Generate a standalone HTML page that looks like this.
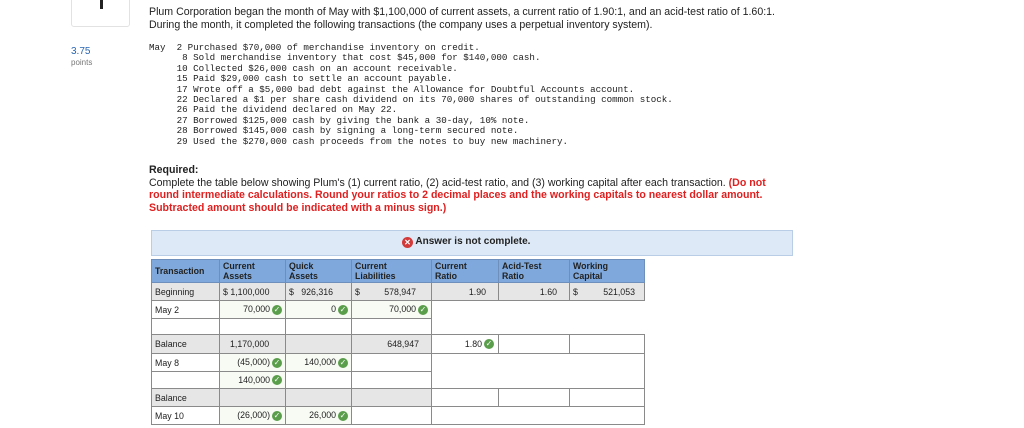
<!DOCTYPE html>
<html><head><meta charset="utf-8"><style>
body{margin:0;width:1024px;height:428px;overflow:hidden;background:#fff;font-family:"Liberation Sans",sans-serif;position:relative}
.a{position:absolute;white-space:nowrap}
.t{font-size:10.6px;color:#222}
.m{font-family:"Liberation Mono",monospace;font-size:9.2px;color:#222;line-height:10.4px;white-space:pre}
.r{color:#e02020;font-weight:bold}
table{position:absolute;left:151px;top:259px;border-collapse:collapse;font-size:8.8px;color:#222;table-layout:fixed}
td{border:1px solid #8a8a8a;padding:0 3px;overflow:hidden;white-space:nowrap}
th{background:#7fa9dd;border:1px solid #6e8fbb;font-weight:bold;text-align:left;padding:0 3px;font-size:8.8px;line-height:10px;color:#222}
.g td{background:#e6e6e6}
.n{text-align:right}
.i{background:#f7fbf4}
.c{display:inline-block;width:10px;height:10px;border-radius:50%;background:#5a9e4b;color:#fff;font-size:8px;line-height:10px;text-align:center;vertical-align:middle;margin-left:2px}
</style></head><body>
<div class="a" style="left:71px;top:-6px;width:57px;height:31px;border:1px solid #e2e2e2;border-radius:3px"></div>
<div class="a" style="left:100px;top:0;width:3px;height:9px;background:#222"></div>
<div class="a t" style="left:149px;top:6px;line-height:12.5px">Plum Corporation began the month of May with $1,100,000 of current assets, a current ratio of 1.90:1, and an acid-test ratio of 1.60:1.<br>During the month, it completed the following transactions (the company uses a perpetual inventory system).</div>
<div class="a" style="left:71px;top:46px;font-size:10px;color:#2a66b0">3.75</div>
<div class="a" style="left:71px;top:58px;font-size:8px;color:#777">points</div>
<div class="a m" style="left:149px;top:43px">May  2 Purchased $70,000 of merchandise inventory on credit.
      8 Sold merchandise inventory that cost $45,000 for $140,000 cash.
     10 Collected $26,000 cash on an account receivable.
     15 Paid $29,000 cash to settle an account payable.
     17 Wrote off a $5,000 bad debt against the Allowance for Doubtful Accounts account.
     22 Declared a $1 per share cash dividend on its 70,000 shares of outstanding common stock.
     26 Paid the dividend declared on May 22.
     27 Borrowed $125,000 cash by giving the bank a 30-day, 10% note.
     28 Borrowed $145,000 cash by signing a long-term secured note.
     29 Used the $270,000 cash proceeds from the notes to buy new machinery.</div>
<div class="a t" style="left:149px;top:164px;line-height:12.6px"><b>Required:</b><br>Complete the table below showing Plum's (1) current ratio, (2) acid-test ratio, and (3) working capital after each transaction. <span class="r">(Do not</span><br><span class="r">round intermediate calculations. Round your ratios to 2 decimal places and the working capitals to nearest dollar amount.</span><br><span class="r">Subtracted amount should be indicated with a minus sign.)</span></div>
<div class="a" style="left:151px;top:230px;width:640px;height:24px;background:#dde9f6;border:1px solid #b9cde6"></div>
<div class="a" style="left:402px;top:236px;font-size:10px;font-weight:bold;color:#222"><span style="display:inline-block;width:11px;height:11px;border-radius:50%;background:#d23a3a;color:#fff;font-size:8px;line-height:11px;text-align:center;vertical-align:-1px">✕</span> Answer is not complete.</div>
<table>
<colgroup><col style="width:68px"><col style="width:66px"><col style="width:66px"><col style="width:80px"><col style="width:67px"><col style="width:71px"><col style="width:75px"></colgroup>
<tr style="height:23px"><th style="vertical-align:middle">Transaction</th><th>Current<br>Assets</th><th>Quick<br>Assets</th><th>Current<br>Liabilities</th><th>Current<br>Ratio</th><th>Acid-Test<br>Ratio</th><th>Working<br>Capital</th></tr>
<tr class="g" style="height:18px"><td>Beginning</td><td>$ 1,100,000</td><td>$ &nbsp;&nbsp;926,316</td><td>$<span style="float:right;padding-right:12px">578,947</span></td><td class="n" style="padding-right:12px">1.90</td><td class="n" style="padding-right:12px">1.60</td><td>$<span style="float:right;padding-right:6px">521,053</span></td></tr>
<tr style="height:18px"><td>May 2</td><td class="n i">70,000<span class="c">✓</span></td><td class="n i">0<span class="c">✓</span></td><td class="n i">70,000<span class="c">✓</span></td><td colspan="3" style="border-bottom:none;border-right:none"></td></tr>
<tr style="height:16px"><td></td><td></td><td></td><td></td><td colspan="3" style="border:none"></td></tr>
<tr class="g" style="height:19px"><td>Balance</td><td style="padding-left:10px">1,170,000</td><td></td><td class="n" style="padding-right:12px">648,947</td><td class="n" style="background:#fff;padding-right:4px">1.80<span class="c">✓</span></td><td style="background:#fff"></td><td style="background:#fff"></td></tr>
<tr style="height:18px"><td>May 8</td><td class="n i">(45,000)<span class="c">✓</span></td><td class="n i">140,000<span class="c">✓</span></td><td></td><td colspan="3" style="border-bottom:none"></td></tr>
<tr style="height:17px"><td></td><td class="n i">140,000<span class="c">✓</span></td><td></td><td></td><td colspan="3" style="border-top:none"></td></tr>
<tr class="g" style="height:18px"><td>Balance</td><td></td><td></td><td></td><td style="background:#fff"></td><td style="background:#fff"></td><td style="background:#fff"></td></tr>
<tr style="height:18px"><td>May 10</td><td class="n i">(26,000)<span class="c">✓</span></td><td class="n i">26,000<span class="c">✓</span></td><td></td><td colspan="3"></td></tr>
</table>
</body></html>
